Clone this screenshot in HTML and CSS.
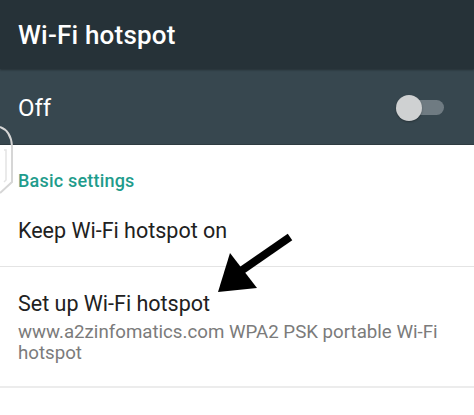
FILE: index.html
```html
<!DOCTYPE html>
<html lang="en">
<head>
    <meta charset="UTF-8">
    <meta name="viewport" content="width=device-width, initial-scale=1.0">
    <title>Wi-Fi hotspot</title>
    <link rel="stylesheet" href="styles.css">
</head>
<body>

<div class="screen">
    <div class="appbar">
        <h1 class="title">Wi-Fi hotspot</h1>
    </div>

    <div class="master">
        <span class="master-label">Off</span>
        <div class="switch">
            <div class="track"></div>
            <div class="thumb"></div>
        </div>
    </div>

    <div class="subheader">Basic settings</div>

    <div class="item">
        <div class="item-title">Keep Wi-Fi hotspot on</div>
    </div>

    <div class="item item-setup">
        <div class="item-title">Set up Wi-Fi hotspot</div>
        <div class="item-summary">www.a2zinfomatics.com WPA2 PSK portable Wi-Fi hotspot</div>
    </div>

    <svg class="overlay" width="474" height="415" viewBox="0 0 474 415">
        <path d="M0 127 Q11 131 12 146 L12 182 L0 193" fill="none" stroke="#d6d6d6" stroke-width="2"/>
        <path d="M4 150 L6 150 L6 180 L4 182" fill="none" stroke="#e4e4e4" stroke-width="1.5"/>
        <line x1="290" y1="237" x2="238" y2="273" stroke="#000" stroke-width="8"/>
        <polygon points="218,292 230,253 257,288" fill="#000"/>
    </svg>
</div>

</body>
</html>
```

FILE: styles.css
```css
body {
    margin: 0;
    font-family: Roboto, "Liberation Sans", Arial, sans-serif;
    background: #fff;
}
.screen {
    position: relative;
    width: 474px;
    height: 415px;
    overflow: hidden;
}
.appbar {
    height: 69px;
    display: flex;
    align-items: center;
    padding-left: 18px;
    background-color: #263238;
    box-shadow: 0 1px 2px rgba(0, 0, 0, 0.35);
    position: relative;
    z-index: 1;
}
.title {
    margin: 0;
    font-size: 26px;
    font-weight: 500;
    letter-spacing: 0.2px;
    color: #fff;
}
.master {
    height: 76px;
    box-sizing: border-box;
    padding: 2px 30px 0 18px;
    display: flex;
    align-items: center;
    justify-content: space-between;
    background-color: #37474f;
    border-bottom: 1px solid #2e3b41;
}
.master-label {
    font-size: 24px;
    color: #fff;
}
.switch {
    position: relative;
    width: 48px;
    height: 26px;
}
.track {
    margin: 5px 0 0 4px;
    width: 44px;
    height: 15px;
    border-radius: 8px;
    background-color: #6f7b82;
}
.thumb {
    position: absolute;
    left: 0;
    top: 0;
    width: 26px;
    height: 26px;
    border-radius: 50%;
    background-color: #cfd1d2;
    box-shadow: 0 1px 2px rgba(0, 0, 0, 0.3);
}
.subheader {
    padding: 24px 18px 0;
    line-height: 24px;
    font-size: 18px;
    font-weight: 500;
    letter-spacing: 0.2px;
    color: #1f9c8c;
}
.item {
    padding: 24px 18px 21px;
    border-bottom: 1px solid #e4e4e4;
}
.item-title {
    font-size: 21.5px;
    line-height: 28px;
    color: #212121;
}
.item-setup {
    padding-top: 23px;
    padding-bottom: 22px;
    border-bottom: 2px solid #ececec;
}
.item-summary {
    margin-top: 4px;
    font-size: 18.7px;
    line-height: 21px;
    color: #7b7b7b;
}
.overlay {
    position: absolute;
    left: 0;
    top: 0;
    z-index: 2;
    pointer-events: none;
}
```
